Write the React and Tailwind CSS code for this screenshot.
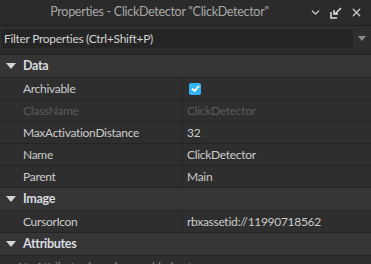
import { ChevronDown, X } from 'lucide-react'

const rows = {
  data: [
    { name: 'Archivable', value: 'check' },
    { name: 'ClassName', value: 'ClickDetector', dim: true },
    { name: 'MaxActivationDistance', value: '32' },
    { name: 'Name', value: 'ClickDetector' },
    { name: 'Parent', value: 'Main' },
  ],
  image: [{ name: 'CursorIcon', value: 'rbxassetid://11990718562' }],
}

const Caret = () => (
  <svg width="10" height="6" viewBox="0 0 10 6" className="shrink-0">
    <path d="M0 0 L10 0 L5 6 Z" fill="#d4d4d4" />
  </svg>
)

const Section = ({ title }) => (
  <div className="h-[23px] flex items-center bg-[#353535] border-b border-[#242424] pl-[6px]">
    <Caret />
    <span className="ml-[7px] font-bold text-[#d8dbe0] text-[12.5px]">{title}</span>
  </div>
)

const Row = ({ name, value, dim }) => (
  <div className="h-[22px] flex border-b border-[#242424] bg-[#2e2e2e]">
    <div className={`w-[183px] shrink-0 pl-[23px] flex items-center border-r border-[#242424] ${dim ? 'text-[#5a5a5a]' : 'text-[#cccccc]'}`}>
      {name}
    </div>
    <div className={`flex-1 pl-[4px] flex items-center ${dim ? 'text-[#5a5a5a]' : 'text-[#cccccc]'}`}>
      {value === 'check' ? (
        <span className="ml-[2px] w-[12px] h-[12px] rounded-[2px] bg-[#35b3f7] flex items-center justify-center">
          <svg width="9" height="7" viewBox="0 0 9 7">
            <path d="M1 3.5 L3.5 6 L8 1" stroke="white" strokeWidth="1.8" fill="none" />
          </svg>
        </span>
      ) : (
        value
      )}
    </div>
  </div>
)

export default function App() {
  return (
    <div className="w-[371px] h-[264px] overflow-hidden bg-[#2e2e2e] text-[12px] tracking-[-0.3px] leading-none font-['Lato',sans-serif]">
      {/* Title bar */}
      <div className="h-[26px] flex items-center bg-[#2b2b2b] border-b border-[#202020]">
        <div className="flex-1 text-center text-[#a8a8a8] text-[12.5px] pl-[10px]">
          Properties - ClickDetector "ClickDetector"
        </div>
        <div className="flex items-center gap-[8px] pr-[8px] text-[#d0d0d0]">
          <ChevronDown size={13} strokeWidth={2.5} />
          <svg width="12" height="12" viewBox="0 0 12 12">
            <path d="M1 5 V11 H7" stroke="#e0e0e0" strokeWidth="1.5" fill="none" />
            <path d="M11 1 L5 7 M4 3 V7 H8" stroke="#e0e0e0" strokeWidth="1.5" fill="none" />
          </svg>
          <X size={13} strokeWidth={2.2} />
        </div>
      </div>

      {/* Filter */}
      <div className="h-[24px] flex items-center bg-[#2e2e2e] pt-[1px]">
        <div className="ml-[1px] w-[352px] h-[19px] bg-[#252525] flex items-center pl-[3px] text-[#d2d2d2]">
          Filter Properties (Ctrl+Shift+P)
        </div>
        <div className="flex-1 flex justify-center">
          <svg width="8" height="5" viewBox="0 0 8 5">
            <path d="M0 0 H8 L4 5 Z" fill="#8a8a8a" />
          </svg>
        </div>
      </div>
      <div className="h-[5px] bg-[#2b2b2b] border-b border-[#242424]" />

      <Section title="Data" />
      {rows.data.map((r) => (
        <Row key={r.name} {...r} />
      ))}
      <Section title="Image" />
      {rows.image.map((r) => (
        <Row key={r.name} {...r} />
      ))}
      <Section title="Attributes" />
      <div className="pl-[18px] pt-[5px] text-[#8a8a8a]">No Attributes have been added yet</div>
    </div>
  )
}
